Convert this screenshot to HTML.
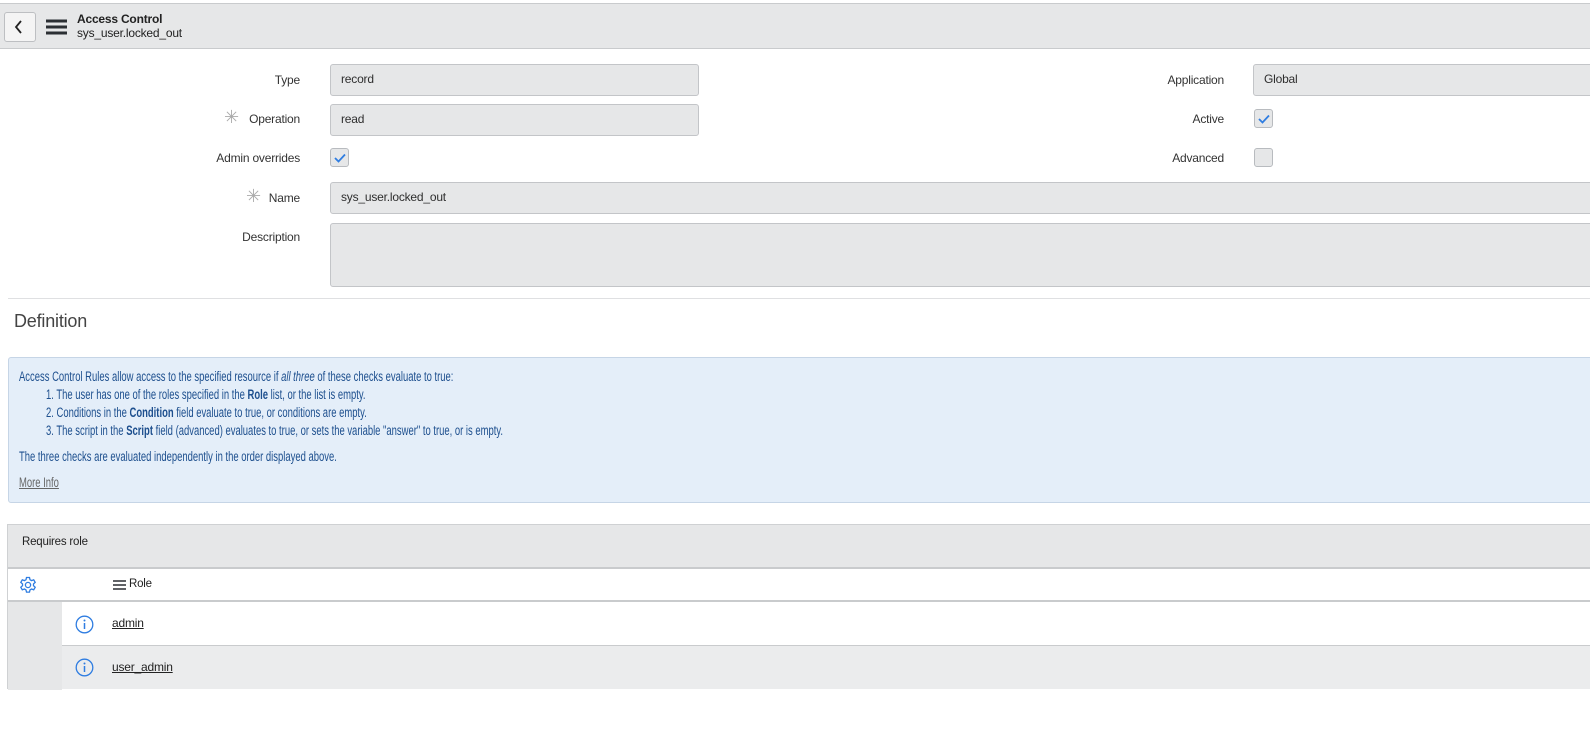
<!DOCTYPE html>
<html><head><style>
*{box-sizing:border-box;margin:0;padding:0}
body{width:1590px;height:738px;background:#fff;font-family:"Liberation Sans",sans-serif;font-size:12px;color:#2e2e2e;position:relative;overflow:hidden;letter-spacing:-0.2px}
.a{position:absolute}
.lbl{position:absolute;text-align:right;width:200px;font-size:12px;color:#333}
.inp{position:absolute;background:#e6e7e8;border:1px solid #c3c5c8;border-radius:3px;padding-left:10px;font-size:12px;color:#2e2e2e;line-height:29px}
.cb{position:absolute;width:19px;height:19px;background:#e6e7e8;border:1px solid #b8bbbf;border-radius:3px}
.star{color:#aaa;font-size:18px;position:absolute}
.info{color:#1d4f8e}
.sc{position:absolute;left:10px;top:0;transform:scaleX(0.7);transform-origin:0 0;font-size:13.5px;letter-spacing:0;white-space:nowrap}
</style></head><body>
<div class="a" style="left:0;top:3px;width:1590px;height:46px;background:#e6e7e8;border-top:1px solid #c9cbcd;border-bottom:1px solid #c9cbcd"></div>
<div class="a" style="left:4px;top:12px;width:32px;height:30px;background:#f4f4f4;border:1px solid #bdbfc2;border-radius:3px"></div>
<svg class="a" style="left:13px;top:19px" width="12" height="16"><path d="M8 2 L3 8 L8 14" stroke="#222" stroke-width="1.8" fill="none"/></svg>
<svg class="a" style="left:46px;top:19px" width="21" height="16"><path d="M0 2h21M0 8h21M0 14h21" stroke="#2b2f33" stroke-width="3"/></svg>
<div class="a" style="left:77px;top:12px;font-size:12px;font-weight:bold;color:#222">Access Control</div>
<div class="a" style="left:77px;top:26px;font-size:12px;color:#222">sys_user.locked_out</div>

<div class="lbl" style="left:100px;top:73px">Type</div>
<div class="inp" style="left:330px;top:64px;width:369px;height:32px">record</div>
<span class="star" style="left:224px;top:107px">✳</span>
<div class="lbl" style="left:100px;top:112px">Operation</div>
<div class="inp" style="left:330px;top:104px;width:369px;height:32px">read</div>
<div class="lbl" style="left:100px;top:151px">Admin overrides</div>
<div class="cb" style="left:330px;top:148px"></div>
<svg class="a" style="left:333px;top:151px" width="14" height="14"><path d="M2 7 L5.5 10.5 L12 3.5" stroke="#2f7de1" stroke-width="1.8" fill="none"/></svg>
<span class="star" style="left:246px;top:186px">✳</span>
<div class="lbl" style="left:100px;top:191px">Name</div>
<div class="inp" style="left:330px;top:182px;width:1270px;height:32px">sys_user.locked_out</div>
<div class="lbl" style="left:100px;top:230px">Description</div>
<div class="inp" style="left:330px;top:223px;width:1270px;height:64px"></div>

<div class="lbl" style="left:1024px;top:73px">Application</div>
<div class="inp" style="left:1253px;top:64px;width:350px;height:32px">Global</div>
<div class="lbl" style="left:1024px;top:112px">Active</div>
<div class="cb" style="left:1254px;top:109px"></div>
<svg class="a" style="left:1257px;top:112px" width="14" height="14"><path d="M2 7 L5.5 10.5 L12 3.5" stroke="#2f7de1" stroke-width="1.8" fill="none"/></svg>
<div class="lbl" style="left:1024px;top:151px">Advanced</div>
<div class="cb" style="left:1254px;top:148px"></div>

<div class="a" style="left:8px;top:298px;width:1590px;height:1px;background:#dfe0e2"></div>
<div class="a" style="left:14px;top:311px;font-size:18px;color:#444">Definition</div>

<div class="a info" style="left:8px;top:357px;width:1600px;height:146px;background:#e4eef9;border:1px solid #c6d5e6;border-radius:3px">
<div class="sc" style="top:11px">Access Control Rules allow access to the specified resource if <i>all three</i> of these checks evaluate to true:</div>
<div class="sc" style="left:37px;top:29px">1. The user has one of the roles specified in the <b>Role</b> list, or the list is empty.</div>
<div class="sc" style="left:37px;top:47px">2. Conditions in the <b>Condition</b> field evaluate to true, or conditions are empty.</div>
<div class="sc" style="left:37px;top:65px">3. The script in the <b>Script</b> field (advanced) evaluates to true, or sets the variable "answer" to true, or is empty.</div>
<div class="sc" style="top:91px">The three checks are evaluated independently in the order displayed above.</div>
<div class="sc" style="top:117px;color:#666;text-decoration:underline">More Info</div>
</div>

<div class="a" style="left:7px;top:524px;width:1600px;height:165px;border:1px solid #cfd1d3;background:#fff">
<div class="a" style="left:0;top:0;width:100%;height:44px;background:#e6e7e8;border-bottom:2px solid #c9cbcd"></div>
<div class="a" style="left:14px;top:11px;font-size:11.5px;color:#222">Requires role</div>
<svg class="a" style="left:11px;top:51px" width="18" height="18" viewBox="0 0 18 18"><path d="M7.5 1.5h3l.5 2.2 1.6.9 2.1-.8 1.5 2.6-1.7 1.5v1.8l1.7 1.5-1.5 2.6-2.1-.8-1.6.9-.5 2.2h-3l-.5-2.2-1.6-.9-2.1.8-1.500-2.6 1.7-1.5V7.9L1.8 6.4l1.5-2.6 2.1.8L7 3.7z" stroke="#2f7de1" stroke-width="1.3" fill="none"/><circle cx="9" cy="9" r="2.6" stroke="#2f7de1" stroke-width="1.3" fill="none"/></svg>
<svg class="a" style="left:105px;top:55px" width="13" height="10"><path d="M0 1h13M0 5h13M0 9h13" stroke="#2b2f33" stroke-width="1.6"/></svg>
<div class="a" style="left:121px;top:53px;font-size:11.5px;color:#222">Role</div>
<div class="a" style="left:0;top:75px;width:100%;height:2px;background:#c9cbcd"></div>
<div class="a" style="left:0;top:77px;width:54px;height:88px;background:#e6e7e8"></div>
<div class="a" style="left:54px;top:120px;width:100%;height:44px;background:#ebeced;border-top:1px solid #c9cbcd"></div>
<svg class="a" style="left:67px;top:90px" width="19" height="19"><circle cx="9.5" cy="9.5" r="8.3" stroke="#2f7de1" stroke-width="1.3" fill="none"/><circle cx="9.5" cy="5.5" r="1" fill="#2f7de1"/><path d="M9.5 8v6" stroke="#2f7de1" stroke-width="1.5"/></svg>
<svg class="a" style="left:67px;top:133px" width="19" height="19"><circle cx="9.5" cy="9.5" r="8.3" stroke="#2f7de1" stroke-width="1.3" fill="none"/><circle cx="9.5" cy="5.5" r="1" fill="#2f7de1"/><path d="M9.5 8v6" stroke="#2f7de1" stroke-width="1.5"/></svg>
<div class="a" style="left:104px;top:91px;text-decoration:underline;color:#222">admin</div>
<div class="a" style="left:104px;top:135px;text-decoration:underline;color:#222">user_admin</div>
</div>
</body></html>
